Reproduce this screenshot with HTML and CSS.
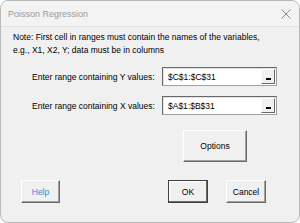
FILE: index.html
```html
<!DOCTYPE html>
<html>
<head>
<meta charset="utf-8">
<link rel="stylesheet" href="styles.css">
</head>
<body>
<div class="window">
  <div class="titlebar">
    <span class="title">Poisson Regression</span>
    <svg class="close" width="10" height="10" viewBox="0 0 10 10"><path d="M0.5 0.5L9.5 9.5M9.5 0.5L0.5 9.5" stroke="#8a8a8a" stroke-width="1"/></svg>
  </div>
  <div class="content">
    <p class="note">Note: First cell in ranges must contain the names of the variables,<br>e.g., X1, X2, Y; data must be in columns</p>
    <div class="row">
      <span class="label">Enter range containing Y values:</span>
      <div class="field"><span class="value">$C$1:$C$31</span><span class="pick"><i class="bar"></i></span></div>
    </div>
    <div class="row">
      <span class="label">Enter range containing X values:</span>
      <div class="field"><span class="value">$A$1:$B$31</span><span class="pick"><i class="bar"></i></span></div>
    </div>
    <div class="options-row"><button class="btn options">Options</button></div>
    <div class="footer">
      <button class="btn help">Help</button>
      <div class="right">
        <button class="btn ok">OK</button>
        <button class="btn cancel">Cancel</button>
      </div>
    </div>
  </div>
</div>
</body>
</html>
```
FILE: styles.css
```css
html, body { margin: 0; padding: 0; background: #ffffff; }
body { font-family: "Liberation Sans", sans-serif; font-size: 8px; color: #000; }
.window {
  width: 300px; height: 223px; box-sizing: border-box;
  border: 1px solid #b9b9b9; border-radius: 8px;
  background: #f0f0f0; overflow: hidden;
  display: flex; flex-direction: column;
}
.titlebar {
  height: 26px; box-sizing: border-box; border-bottom: 1px solid #e2e2e2;
  display: flex; align-items: center; justify-content: space-between;
  padding: 0 8px 0 7px; background: #f3f3f3;
}
.title { color: #9a9a9a; font-size: 9px; font-family: "Liberation Sans", sans-serif; }
.content { padding: 4px 0 0 12px; flex: 1; display: flex; flex-direction: column; }
.note { margin: 0; line-height: 13px; font-size: 8.5px; }
.row { display: flex; align-items: center; margin-top: 10px; padding-left: 19px; height: 19px; }
.label { width: 130px; font-size: 8.5px; }
.field {
  width: 115px; height: 19px; box-sizing: border-box; background: #fff;
  border: 1px solid #a0a0a0; border-top-color: #696969; border-left-color: #696969;
  box-shadow: inset 1px 1px 0 #e3e3e3;
  display: flex; align-items: center; justify-content: space-between;
}
.value { padding-left: 5px; font-size: 8.5px; }
.pick {
  width: 14px; height: 15px; box-sizing: border-box; margin-right: 1px;
  background: #f0f0f0; border-right: 1px solid #696969; border-bottom: 1px solid #696969;
  border-left: 1px solid #fff; border-top: 1px solid #fff;
  display: flex; align-items: flex-end; justify-content: center; padding-bottom: 3px;
}
.bar { display: block; width: 5px; height: 2px; background: #000; }
.btn {
  font-family: "Liberation Sans", sans-serif; font-size: 8.5px; color: #000;
  background: #f0f0f0; box-sizing: border-box; padding: 0;
  border: 1px solid #fff; border-right-color: #696969; border-bottom-color: #696969;
  box-shadow: inset -1px -1px 0 #a0a0a0;
}
.options-row { display: flex; padding-left: 170px; margin-top: 15px; }
.options { width: 64px; height: 32px; }
.footer { display: flex; justify-content: space-between; margin-top: 18px; padding-left: 8px; padding-right: 33px; }
.right { display: flex; gap: 18px; }
.help { width: 39px; height: 23px; color: #3f86dd; }
.ok { width: 40px; height: 23px; border: 1px solid #404040; box-shadow: inset -1px -1px 0 #696969, inset 1px 1px 0 #fff; }
.cancel { width: 40px; height: 23px; }
```
